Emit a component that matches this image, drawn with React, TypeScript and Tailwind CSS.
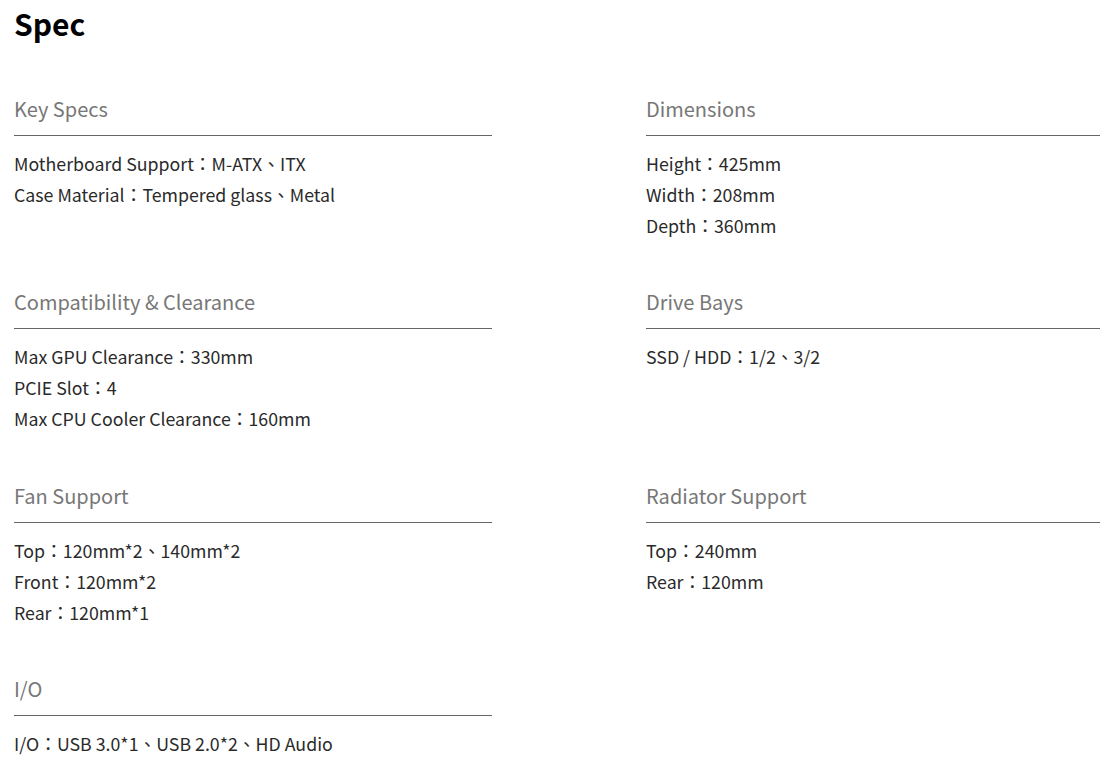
const sections: { title: string; items: string[] }[] = [
  { title: "Key Specs", items: ["Motherboard Support：M-ATX、ITX", "Case Material：Tempered glass、Metal"] },
  { title: "Dimensions", items: ["Height：425mm", "Width：208mm", "Depth：360mm"] },
  {
    title: "Compatibility & Clearance",
    items: ["Max GPU Clearance：330mm", "PCIE Slot：4", "Max CPU Cooler Clearance：160mm"],
  },
  { title: "Drive Bays", items: ["SSD / HDD：1/2、3/2"] },
  { title: "Fan Support", items: ["Top：120mm*2、140mm*2", "Front：120mm*2", "Rear：120mm*1"] },
  { title: "Radiator Support", items: ["Top：240mm", "Rear：120mm"] },
  { title: "I/O", items: ["I/O：USB 3.0*1、USB 2.0*2、HD Audio"] },
];

export default function App() {
  return (
    <div
      className="h-[777px] overflow-hidden bg-white px-[14px] text-[#2a2a2a]"
      style={{ fontFamily: '"Noto Sans CJK TC", "Noto Sans", sans-serif' }}
    >
      <h1 className="pt-[1px] text-[30px] font-bold leading-[44px] text-black">Spec</h1>
      <div className="mt-[49px] grid grid-cols-[478px_454px] auto-rows-[147.3px] gap-x-[154px] gap-y-[46px]">
        {sections.map((s) => (
          <div key={s.title}>
            <h2 className="border-b border-[#666] pb-[11px] text-[20px] leading-[30px] text-[#777]">
              {s.title}
            </h2>
            <ul className="pt-[12px]">
              {s.items.map((it) => (
                <li key={it} className="text-[17.75px] leading-[31px] text-[#2a2a2a]">
                  {it}
                </li>
              ))}
            </ul>
          </div>
        ))}
      </div>
    </div>
  );
}
